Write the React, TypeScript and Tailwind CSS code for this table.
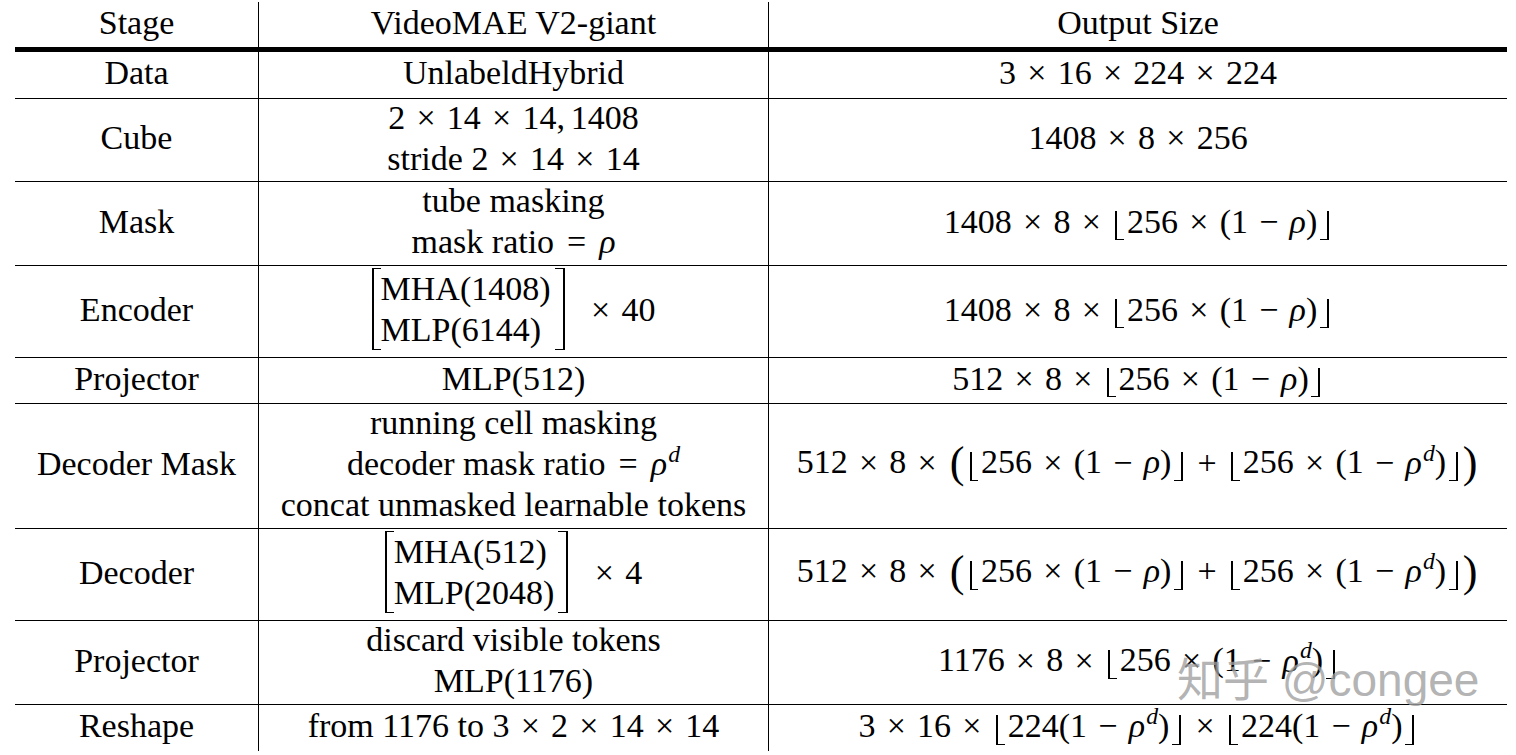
import type { ReactNode } from "react"

const X = () => <span className="mx-[0.33em]">×</span>
const Minus = () => <span className="mx-[0.33em]">−</span>
const Plus = () => <span className="mx-[0.33em]">+</span>
const Eq = () => <span className="mx-[0.38em]">=</span>

function Rho({ d }: { d?: boolean }) {
  return (
    <span className="italic">
      ρ
      {d && (
        <span className="ml-[0.05em] text-[0.7em] leading-none align-[0.55em]">d</span>
      )}
    </span>
  )
}

function Floor({ children }: { children: ReactNode }) {
  return (
    <>
      <span className="ml-[0.1em] mr-[0.08em] inline-block h-[0.86em] w-[0.26em] border-b border-l-2 border-black align-[-0.22em]" />
      {children}
      <span className="ml-[0.08em] mr-[0.1em] inline-block h-[0.86em] w-[0.26em] border-b border-r-2 border-black align-[-0.22em]" />
    </>
  )
}

const Big = ({ c }: { c: string }) => (
  <span className="mx-[0.04em] text-[1.3em] leading-none align-[-0.08em]">{c}</span>
)

// ⌊256 × (1 − ρ)⌋, optionally with ρ^d
const FloorTerm = ({ d }: { d?: boolean }) => (
  <Floor>
    256
    <X />
    (1
    <Minus />
    <Rho d={d} />)
  </Floor>
)

function Matrix({ top, bottom, n }: { top: string; bottom: string; n: string }) {
  return (
    <span className="inline-flex items-center">
      <span className="flex items-stretch py-[2px]">
        <span className="w-[9px] border-y border-l-2 border-black" />
        <span className="flex flex-col pr-[4px]">
          <span>{top}</span>
          <span>{bottom}</span>
        </span>
        <span className="w-[10px] border-y border-r-2 border-black" />
      </span>
      <span className="ml-[0.45em]">
        <X />
        {n}
      </span>
    </span>
  )
}

type Row = {
  h: string
  stage: string
  model: ReactNode
  out: ReactNode
  last?: boolean
}

const rows: Row[] = [
  {
    h: "h-[47px]",
    stage: "Data",
    model: <span>UnlabeldHybrid</span>,
    out: (
      <span>
        3<X />16<X />224<X />224
      </span>
    ),
  },
  {
    h: "h-[83px]",
    stage: "Cube",
    model: (
      <>
        <span>
          2<X />14<X />14,<span className="ml-[0.17em]">1408</span>
        </span>
        <span>
          stride 2<X />14<X />14
        </span>
      </>
    ),
    out: (
      <span>
        1408<X />8<X />256
      </span>
    ),
  },
  {
    h: "h-[84px]",
    stage: "Mask",
    model: (
      <>
        <span>tube masking</span>
        <span>
          mask ratio<Eq />
          <Rho />
        </span>
      </>
    ),
    out: (
      <span>
        1408<X />8<X />
        <FloorTerm />
      </span>
    ),
  },
  {
    h: "h-[92px]",
    stage: "Encoder",
    model: <Matrix top="MHA(1408)" bottom="MLP(6144)" n="40" />,
    out: (
      <span>
        1408<X />8<X />
        <FloorTerm />
      </span>
    ),
  },
  {
    h: "h-[46px]",
    stage: "Projector",
    model: <span>MLP(512)</span>,
    out: (
      <span>
        512<X />8<X />
        <FloorTerm />
      </span>
    ),
  },
  {
    h: "h-[125px]",
    stage: "Decoder Mask",
    model: (
      <>
        <span>running cell masking</span>
        <span>
          decoder mask ratio<Eq />
          <Rho d />
        </span>
        <span>concat unmasked learnable tokens</span>
      </>
    ),
    out: (
      <span>
        512<X />8<X />
        <Big c="(" />
        <FloorTerm />
        <Plus />
        <FloorTerm d />
        <Big c=")" />
      </span>
    ),
  },
  {
    h: "h-[92px]",
    stage: "Decoder",
    model: <Matrix top="MHA(512)" bottom="MLP(2048)" n="4" />,
    out: (
      <span>
        512<X />8<X />
        <Big c="(" />
        <FloorTerm />
        <Plus />
        <FloorTerm d />
        <Big c=")" />
      </span>
    ),
  },
  {
    h: "h-[84px]",
    stage: "Projector",
    model: (
      <>
        <span>discard visible tokens</span>
        <span>MLP(1176)</span>
      </>
    ),
    out: (
      <span>
        1176<X />8<X />
        <FloorTerm d />
      </span>
    ),
  },
  {
    h: "h-[46px]",
    stage: "Reshape",
    model: (
      <span>
        from 1176 to 3<X />2<X />14<X />14
      </span>
    ),
    out: (
      <span>
        3<X />16<X />
        <Floor>
          224(1
          <Minus />
          <Rho d />)
        </Floor>
        <X />
        <Floor>
          224(1
          <Minus />
          <Rho d />)
        </Floor>
      </span>
    ),
    last: true,
  },
]

export default function App() {
  return (
    <div className="relative h-[755px] w-[1516px] overflow-hidden bg-white [font-family:'Liberation_Serif','DejaVu_Serif',serif] text-[34px] leading-[41px] text-black">
      <div className="ml-[15px] mt-[2px] w-[1492px]">
        <div className="flex h-[50px] border-b-[5px] border-black">
          <div className="flex w-[244px] items-center justify-center border-r border-black pb-[5px]">Stage</div>
          <div className="flex w-[510px] items-center justify-center border-r border-black pb-[5px]">VideoMAE V2-giant</div>
          <div className="flex flex-1 items-center justify-center pb-[5px]">Output Size</div>
        </div>

        {rows.map((r, i) => (
          <div key={i} className={`flex ${r.h} ${r.last ? "" : "border-b border-black"}`}>
            <div className="flex w-[244px] items-center justify-center border-r border-black pb-[5px]">{r.stage}</div>
            <div className="flex w-[510px] flex-col items-center justify-center whitespace-nowrap border-r border-black pb-[5px]">
              {r.model}
            </div>
            <div className="flex flex-1 items-center justify-center whitespace-nowrap pb-[5px]">{r.out}</div>
          </div>
        ))}
      </div>

      {/* watermark */}
      <div className="absolute left-[1177px] top-[657px] whitespace-nowrap [font-family:'Liberation_Sans','Noto_Sans_CJK_SC',sans-serif] text-[46px] leading-none text-[#a0a0a0]/80">
        知乎 @congee
      </div>
    </div>
  )
}
